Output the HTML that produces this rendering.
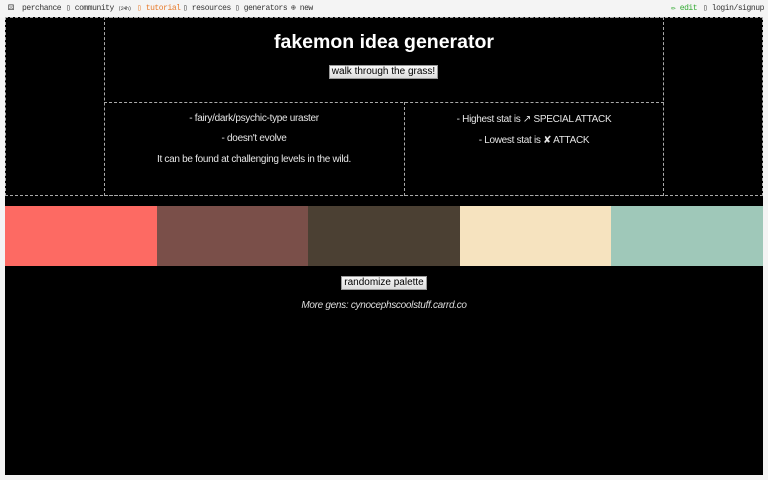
<!DOCTYPE html>
<html><head><style>
*{margin:0;padding:0;box-sizing:border-box}
body{width:768px;height:480px;background:#f4f4f4;position:relative;overflow:hidden;font-family:"Liberation Sans",sans-serif}
.nav{position:absolute;top:0;left:0;width:768px;height:17px;font-family:"Liberation Mono",monospace;font-size:8px;color:#333;line-height:17px;letter-spacing:-0.45px}
.nav>span{position:absolute;top:0;white-space:nowrap}
.main{position:absolute;left:5px;top:17px;width:758px;height:458px;background:#000}
.d{position:absolute;border:1px dashed #aaa}
.t{position:absolute;color:#e6e6e6;font-size:10px;text-align:center;letter-spacing:-0.3px}
.btn{position:absolute;background:linear-gradient(#f8f8f8,#ddd);border:1px solid #999;font-size:10px;color:#000;text-align:center;line-height:12px}
.p{position:absolute;top:206px;height:60px}
</style></head><body>
<div class="nav">
<span style="left:8px;font-size:10px">⚄</span>
<span style="left:22px">perchance</span>
<span style="left:66px">▯ community <small style="font-size:5px">(24h)</small></span>
<span style="left:137px;color:#e87a2a">▯ tutorial</span>
<span style="left:183px">▯ resources</span>
<span style="left:235px">▯ generators</span>
<span style="left:291px">⊕ new</span>
<span style="left:671px;color:#3a3">✏ edit</span>
<span style="left:703px">▯ login/signup</span>
</div>
<div class="main"></div>
<div class="d" style="left:5px;top:17px;width:758px;height:179px"></div>
<div class="d" style="left:104px;top:17px;width:560px;height:179px"></div>
<div class="d" style="left:104px;top:102px;width:560px;height:1px;border-width:1px 0 0 0"></div>
<div class="d" style="left:404px;top:102px;width:1px;height:94px;border-width:0 0 0 1px"></div>
<div class="t" style="left:104px;width:560px;top:31px;font-size:19.5px;font-weight:bold;color:#fff;letter-spacing:0">fakemon idea generator</div>
<div class="btn" style="left:329px;top:65px;width:109px;height:14px">walk through the grass!</div>
<div class="t" style="left:104px;width:300px;top:113px">- fairy/dark/psychic-type uraster</div>
<div class="t" style="left:104px;width:300px;top:133px">- doesn't evolve</div>
<div class="t" style="left:104px;width:300px;top:154px">It can be found at challenging levels in the wild.</div>
<div class="t" style="left:404px;width:260px;top:114px">- Highest stat is ↗ SPECIAL ATTACK</div>
<div class="t" style="left:404px;width:260px;top:135px">- Lowest stat is ✘ ATTACK</div>
<div class="p" style="left:5px;width:152px;background:#fd6a63"></div>
<div class="p" style="left:157px;width:151px;background:#7a4f49"></div>
<div class="p" style="left:308px;width:152px;background:#4b4033"></div>
<div class="p" style="left:460px;width:151px;background:#f6e3bf"></div>
<div class="p" style="left:611px;width:152px;background:#9fc8b9"></div>
<div class="btn" style="left:341px;top:276px;width:86px;height:14px">randomize palette</div>
<div class="t" style="left:5px;width:758px;top:300px;font-style:italic;color:#ddd">More gens: cynocephscoolstuff.carrd.co</div>
</body></html>
